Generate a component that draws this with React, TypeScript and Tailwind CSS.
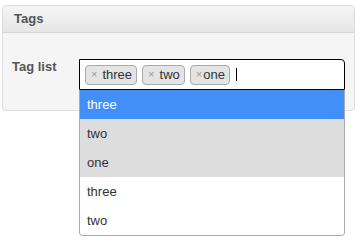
const tags = [
    { label: "three", gap: "mr-[5px]" },
    { label: "two", gap: "mr-[5px]" },
    { label: "one", gap: "mr-[1px]" },
];

const options = [
    { label: "three", state: "active" },
    { label: "two", state: "selected" },
    { label: "one", state: "selected" },
    { label: "three", state: "none" },
    { label: "two", state: "none" },
];

export default function App() {
    return (
        <div className="h-[246px] w-[360px] bg-white pt-[5px] pl-[2px] font-['Liberation_Sans',Arial,sans-serif] text-[13px] text-[#333]">
            <div className="w-[353px] rounded-[4px] border border-[#dddddd] bg-[#f5f5f5]">
                <div className="flex h-[27px] items-center rounded-t-[4px] border-b border-[#d6d6d6] bg-gradient-to-b from-[#f5f5f5] to-[#e6e6e6] pl-[11px] font-bold text-[#555]">
                    Tags
                </div>
                <div className="flex h-[77px] pt-[26px] pl-[9px]">
                    <div className="w-[67px] pt-[1px] font-bold leading-[14px] text-[#555]">Tag list</div>
                    <div className="relative">
                        <div className="flex h-[31px] w-[266px] items-center gap-[5px] rounded-tr-[4px] border border-black bg-white pl-[5px]">
                            {tags.map((tag) => (
                                <span
                                    key={tag.label}
                                    className="flex h-[20px] items-center rounded-[4px] border border-[#aaaaaa] bg-[#e4e4e4] pr-[4px] pl-[5px] leading-none"
                                >
                                    <span className={"text-[11px] text-[#999] " + tag.gap}>×</span>
                                    {tag.label}
                                </span>
                            ))}
                            <span className="ml-[1px] h-[13px] w-px bg-black" />
                        </div>
                        <div className="absolute top-[31px] left-0 z-10 w-[266px] overflow-hidden rounded-b-[4px] border border-t-0 border-[#aaaaaa] bg-white">
                            {options.map((opt, i) => (
                                <div
                                    key={i}
                                    className={
                                        "flex h-[29px] items-center pl-[7px] " +
                                        (opt.state === "active"
                                            ? "bg-[#428ff7] text-white"
                                            : opt.state === "selected"
                                              ? "bg-[#dddddd]"
                                              : "bg-white")
                                    }
                                >
                                    {opt.label}
                                </div>
                            ))}
                        </div>
                    </div>
                </div>
            </div>
        </div>
    );
}
